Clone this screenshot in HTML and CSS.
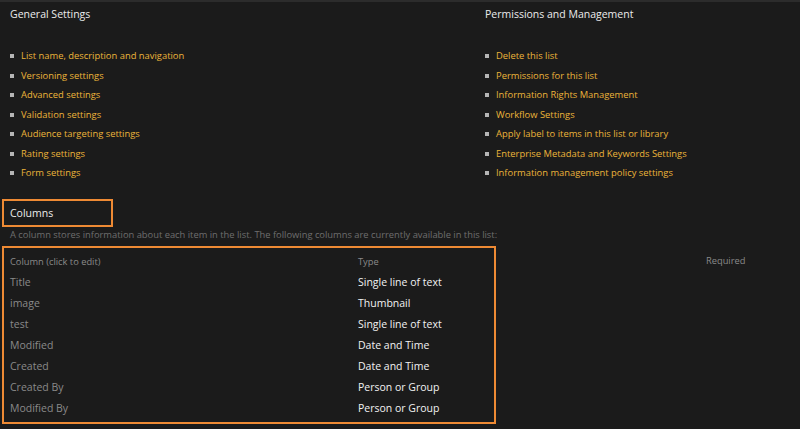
FILE: index.html
```html
<!DOCTYPE html>
<html>
<head>
<meta charset="utf-8">
<link rel="stylesheet" href="styles.css">
</head>
<body>
<div class="page">
  <div class="settings">
    <section class="group">
      <h2 class="group-title">General Settings</h2>
      <ul class="links">
        <li>List name, description and navigation</li>
        <li>Versioning settings</li>
        <li>Advanced settings</li>
        <li>Validation settings</li>
        <li>Audience targeting settings</li>
        <li>Rating settings</li>
        <li>Form settings</li>
      </ul>
    </section>
    <section class="group">
      <h2 class="group-title">Permissions and Management</h2>
      <ul class="links">
        <li>Delete this list</li>
        <li>Permissions for this list</li>
        <li>Information Rights Management</li>
        <li>Workflow Settings</li>
        <li>Apply label to items in this list or library</li>
        <li>Enterprise Metadata and Keywords Settings</li>
        <li>Information management policy settings</li>
      </ul>
    </section>
  </div>
  <div class="columns-head">
    <h2 class="columns-title">Columns</h2>
  </div>
  <p class="desc">A column stores information about each item in the list. The following columns are currently available in this list:</p>
  <div class="table-wrap">
    <div class="table">
      <div class="row head"><span class="c-name">Column (click to edit)</span><span class="c-type">Type</span></div>
      <div class="row"><span class="c-name">Title</span><span class="c-type">Single line of text</span></div>
      <div class="row"><span class="c-name">image</span><span class="c-type">Thumbnail</span></div>
      <div class="row"><span class="c-name">test</span><span class="c-type">Single line of text</span></div>
      <div class="row"><span class="c-name">Modified</span><span class="c-type">Date and Time</span></div>
      <div class="row"><span class="c-name">Created</span><span class="c-type">Date and Time</span></div>
      <div class="row"><span class="c-name">Created By</span><span class="c-type">Person or Group</span></div>
      <div class="row"><span class="c-name">Modified By</span><span class="c-type">Person or Group</span></div>
    </div>
    <span class="required">Required</span>
  </div>
</div>
</body>
</html>
```

FILE: styles.css
```css
html, body {
  margin: 0;
  padding: 0;
  background: #1b1b1b;
  height: 100%;
  overflow: hidden;
}
body {
  font-family: "Open Sans", "Noto Sans", sans-serif;
  font-size: 10px;
  color: #e6e6e6;
}
.page {
  border-top: 2px solid #2c2c2c;
  padding: 0 0 0 2px;
}
.settings {
  display: grid;
  grid-template-columns: 475px 1fr;
  padding-left: 8px;
}
.group-title {
  margin: 0;
  font-size: 10.5px;
  font-weight: 400;
  color: #ececec;
  line-height: 16px;
  padding-top: 4px;
  height: 40px;
}
.links {
  list-style: none;
  margin: 0;
  padding: 0;
}
.links li {
  position: relative;
  padding-left: 11px;
  line-height: 19.5px;
  color: #ebb43a;
  font-size: 9.4px;
}
.links li::before {
  content: "";
  position: absolute;
  left: 0;
  top: 8px;
  width: 4px;
  height: 4px;
  background: #b5b5b5;
}
.columns-head {
  margin-top: 16px;
  height: 24px;
  border: 2px solid #ee8a34;
  display: flex;
  align-items: center;
  padding-left: 6px;
  box-sizing: content-box;
  width: 101px;
}
.columns-title {
  margin: 0;
  font-size: 10.5px;
  font-weight: 400;
  color: #ececec;
}
.desc {
  margin: 1px 0 0 8px;
  font-size: 9.35px;
  color: #6e6e6e;
  line-height: 14px;
}
.table-wrap {
  display: flex;
  align-items: flex-start;
  margin-top: 4px;
}
.table {
  border: 2px solid #ee8a34;
  padding: 4px 0 3px 6px;
  box-sizing: content-box;
  width: 484px;
}
.row {
  display: grid;
  grid-template-columns: 348px 1fr;
  height: 21px;
  align-items: center;
  font-size: 10.5px;
}
.row .c-name { color: #8a8a8a; }
.row .c-type { color: #f2f2f2; }
.row.head { height: 20px; font-size: 9.3px; }
.row.head .c-type { color: #8a8a8a; }
.required {
  margin-left: 210px;
  margin-top: 8px;
  font-size: 9.3px;
  color: #8a8a8a;
}
```
